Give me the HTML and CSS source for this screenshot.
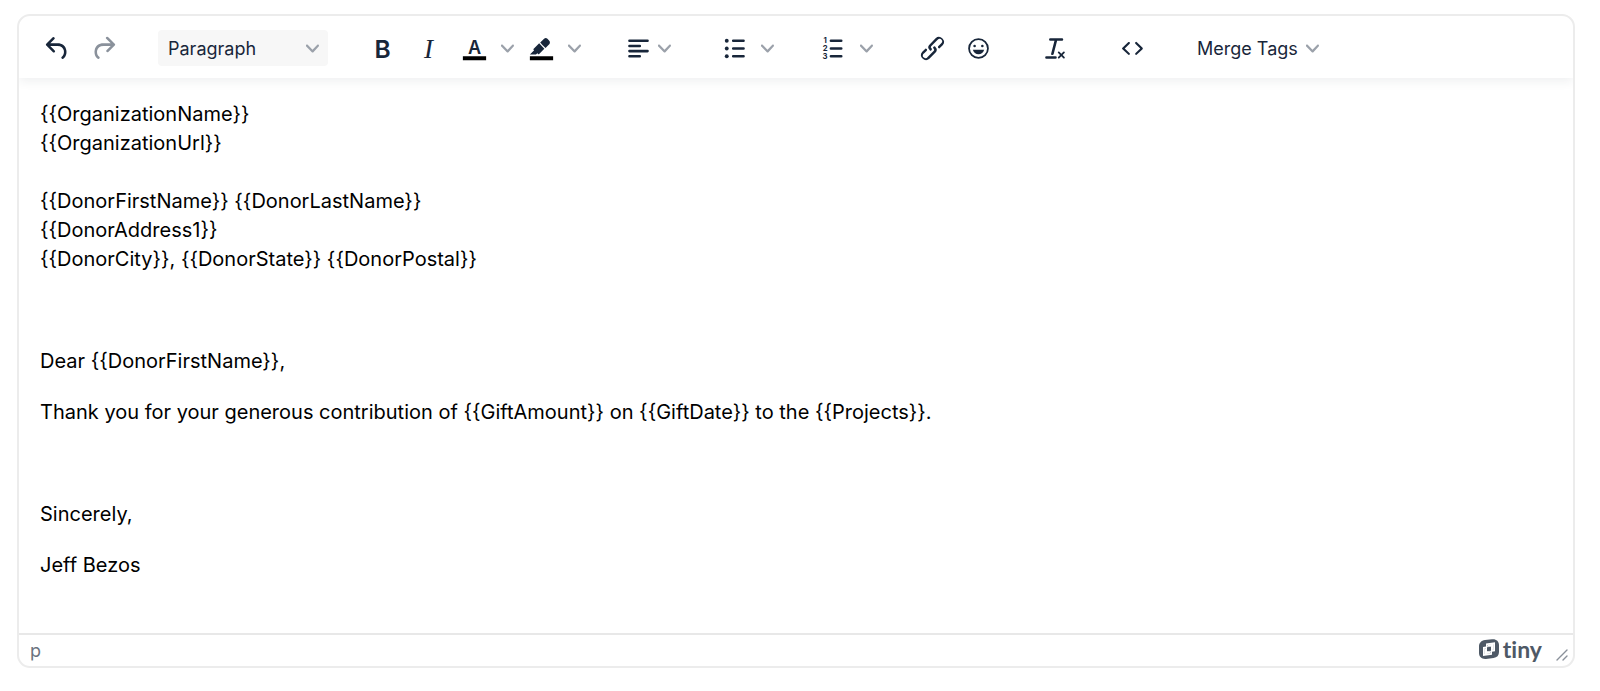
FILE: index.html
```html
<!DOCTYPE html>
<html lang="en">
<head>
    <meta charset="UTF-8">
    <meta name="viewport" content="width=device-width, initial-scale=1.0">
    <title>Letter Editor</title>
    <link rel="stylesheet" href="styles.css">
</head>
<body>
    <!-- shared chevron -->
    <svg class="sprite" aria-hidden="true">
        <symbol id="chevron" viewBox="0 0 10 10">
            <path d="M8.7 2.2c.3-.3.8-.3 1 0 .4.4.4.9 0 1.2L5.7 7.8c-.3.3-.9.3-1.2 0L.2 3.4a.8.8 0 0 1 0-1.2c.3-.3.8-.3 1.1 0L5 6l3.7-3.8Z"/>
        </symbol>
    </svg>

    <main class="editor">
        <div class="toolbar" role="toolbar" aria-label="Formatting">
            <div class="group">
                <button class="btn" type="button" aria-label="Undo">
                    <svg class="icon" viewBox="0 0 24 24"><path d="M6.4 8H12c3.7 0 6.2 2 6.8 5.1.6 2.7-.4 5.6-2.3 6.8a1 1 0 0 1-1-1.8c1.1-.6 1.8-2.7 1.4-4.6-.5-2.1-2.1-3.5-4.9-3.5H6.4l3.3 3.3a1 1 0 1 1-1.4 1.4l-5-5a1 1 0 0 1 0-1.4l5-5a1 1 0 0 1 1.4 1.4L6.4 8Z"/></svg>
                </button>
                <button class="btn" type="button" aria-label="Redo" disabled>
                    <svg class="icon" viewBox="0 0 24 24"><path d="M17.6 10H12c-2.8 0-4.4 1.4-4.9 3.5-.4 2 .3 4 1.4 4.6a1 1 0 1 1-1 1.8c-2-1.2-2.9-4.1-2.3-6.8.6-3 3-5.1 6.8-5.1h5.6l-3.3-3.3a1 1 0 1 1 1.4-1.4l5 5a1 1 0 0 1 0 1.4l-5 5a1 1 0 0 1-1.4-1.4l3.3-3.3Z"/></svg>
                </button>
            </div>

            <div class="group">
                <div class="select-box">
                    <select class="block-select" aria-label="Blocks">
                        <option>Paragraph</option>
                        <option>Heading 1</option>
                        <option>Heading 2</option>
                        <option>Heading 3</option>
                    </select>
                    <svg class="chevron"><use href="#chevron"/></svg>
                </div>
            </div>

            <div class="group">
                <button class="btn" type="button" aria-label="Bold">
                    <svg class="icon" viewBox="0 0 24 24"><text class="letter-bold" x="12" y="19">B</text></svg>
                </button>
                <button class="btn" type="button" aria-label="Italic">
                    <svg class="icon" viewBox="0 0 24 24"><text class="letter-italic" x="12" y="19">I</text></svg>
                </button>
                <div class="split">
                    <button class="btn" type="button" aria-label="Text color">
                        <svg class="icon" viewBox="0 0 24 24"><path class="swatch" d="M3 18h18v3H3z"/><text class="letter-color" x="12" y="16">A</text></svg>
                    </button>
                    <button class="btn-chevron" type="button" aria-label="Text color menu"><svg class="chevron"><use href="#chevron"/></svg></button>
                </div>
                <div class="split">
                    <button class="btn" type="button" aria-label="Highlight color">
                        <svg class="icon" viewBox="0 0 24 24"><path class="swatch" d="M3 18h18v3H3z"/><path d="M7.7 16.7H3l3.3-3.3-.7-.8L10.2 8l4 4.1-4 4.2c-.2.2-.6.2-.8 0l-.6-.7-1.1 1.1Zm5-7.5L11 7.4l3-2.9a2 2 0 0 1 2.6 0L18 6c.7.7.7 2 0 2.7l-2.9 2.9-1.8-1.8-.6-.6Z"/></svg>
                    </button>
                    <button class="btn-chevron" type="button" aria-label="Highlight color menu"><svg class="chevron"><use href="#chevron"/></svg></button>
                </div>
            </div>

            <div class="group">
                <button class="btn-menu" type="button" aria-label="Align">
                    <svg class="icon" viewBox="0 0 24 24"><path d="M5 5h14a1 1 0 0 1 0 2H5a1 1 0 1 1 0-2Zm0 4h8a1 1 0 0 1 0 2H5a1 1 0 1 1 0-2Zm0 8h8a1 1 0 0 1 0 2H5a1 1 0 0 1 0-2Zm0-4h14a1 1 0 0 1 0 2H5a1 1 0 0 1 0-2Z"/></svg>
                    <svg class="chevron"><use href="#chevron"/></svg>
                </button>
            </div>

            <div class="group">
                <div class="split">
                    <button class="btn" type="button" aria-label="Bullet list">
                        <svg class="icon" viewBox="0 0 24 24"><path d="M11 5h8a1 1 0 0 1 0 2h-8a1 1 0 0 1 0-2Zm0 6h8a1 1 0 0 1 0 2h-8a1 1 0 0 1 0-2Zm0 6h8a1 1 0 0 1 0 2h-8a1 1 0 0 1 0-2Z"/><circle cx="6" cy="6" r="1.5"/><circle cx="6" cy="12" r="1.5"/><circle cx="6" cy="18" r="1.5"/></svg>
                    </button>
                    <button class="btn-chevron" type="button" aria-label="Bullet list styles"><svg class="chevron"><use href="#chevron"/></svg></button>
                </div>
            </div>

            <div class="group">
                <div class="split">
                    <button class="btn" type="button" aria-label="Numbered list">
                        <svg class="icon" viewBox="0 0 24 24"><path d="M10 5h8a1 1 0 0 1 0 2h-8a1 1 0 1 1 0-2Zm0 6h8a1 1 0 0 1 0 2h-8a1 1 0 0 1 0-2Zm0 6h8a1 1 0 0 1 0 2h-8a1 1 0 0 1 0-2Z"/><text class="digit" x="5.5" y="8">1</text><text class="digit" x="5.5" y="14">2</text><text class="digit" x="5.5" y="20">3</text></svg>
                    </button>
                    <button class="btn-chevron" type="button" aria-label="Numbered list styles"><svg class="chevron"><use href="#chevron"/></svg></button>
                </div>
            </div>

            <div class="group">
                <button class="btn" type="button" aria-label="Insert link">
                    <svg class="icon" viewBox="0 0 24 24"><path d="M6.2 12.3a1 1 0 0 1 1.4 1.4l-2 2a2 2 0 1 0 2.6 2.8l4.8-4.8a1 1 0 0 0 0-1.4 1 1 0 1 1 1.4-1.3 2.9 2.9 0 0 1 0 4L9.6 20a3.9 3.9 0 0 1-5.5-5.5l2-2Zm11.6-.6a1 1 0 0 1-1.4-1.4l2-2a2 2 0 1 0-2.6-2.8L11 10.3a1 1 0 0 0 0 1.4A1 1 0 1 1 9.6 13a2.9 2.9 0 0 1 0-4L14.4 4a3.9 3.9 0 0 1 5.5 5.5l-2 2Z"/></svg>
                </button>
                <button class="btn" type="button" aria-label="Emojis">
                    <svg class="icon" viewBox="0 0 24 24"><circle class="line" cx="12" cy="12" r="7.3"/><circle cx="9" cy="10" r="1"/><circle cx="15" cy="10" r="1"/><path d="M7.6 13h8.8c-.4 2-2.3 3.5-4.4 3.5S8.1 15 7.6 13Z"/></svg>
                </button>
            </div>

            <div class="group">
                <button class="btn" type="button" aria-label="Clear formatting">
                    <svg class="icon" viewBox="0 0 24 24"><path d="M13.2 6a1 1 0 0 1 0 .2l-2.6 10a1 1 0 0 1-1 .8h-.2a.8.8 0 0 1-.8-1l2.6-10H8a1 1 0 1 1 0-2h9a1 1 0 0 1 0 2h-3.8ZM5 18h7a1 1 0 0 1 0 2H5a1 1 0 0 1 0-2Zm13 1.5L16.5 18 15 19.5a.7.7 0 0 1-1-1l1.5-1.5-1.5-1.5a.7.7 0 0 1 1-1l1.5 1.5 1.5-1.5a.7.7 0 0 1 1 1L17.5 17l1.5 1.5a.7.7 0 0 1-1 1Z"/></svg>
                </button>
            </div>

            <div class="group">
                <button class="btn" type="button" aria-label="Source code">
                    <svg class="icon" viewBox="0 0 24 24"><path d="M9.8 15.7c.3.3.3.8 0 1-.3.4-.9.4-1.2 0l-4.4-4.1a.8.8 0 0 1 0-1.2l4.4-4.2c.3-.3.9-.3 1.2 0 .3.3.3.8 0 1.1L6 12l3.8 3.7ZM14.2 15.7c-.3.3-.3.8 0 1 .4.4.9.4 1.2 0l4.4-4.1c.3-.3.3-.9 0-1.2l-4.4-4.2a.8.8 0 0 0-1.2 0c-.3.3-.3.8 0 1.1L18 12l-3.8 3.7Z"/></svg>
                </button>
            </div>

            <div class="group">
                <button class="btn-menu btn-text" type="button">
                    <span>Merge Tags</span>
                    <svg class="chevron"><use href="#chevron"/></svg>
                </button>
            </div>
        </div>

        <div class="content" contenteditable="true" spellcheck="false" role="textbox" aria-multiline="true" aria-label="Letter">
            <p>{{OrganizationName}}<br>{{OrganizationUrl}}<br><br>{{DonorFirstName}} {{DonorLastName}}<br>{{DonorAddress1}}<br>{{DonorCity}}, {{DonorState}} {{DonorPostal}}</p>
            <p><br></p>
            <p>Dear {{DonorFirstName}},</p>
            <p>Thank you for your generous contribution of {{GiftAmount}} on {{GiftDate}} to the {{Projects}}.</p>
            <p><br></p>
            <p>Sincerely,</p>
            <p>Jeff Bezos</p>
        </div>

        <div class="statusbar">
            <button class="path" type="button">p</button>
            <a class="brand" href="#">
                <svg class="brand-mark" viewBox="0 0 20 20">
                    <path d="M6 1 13 .2C17-.3 20 2 20 6v7c0 3.500-2 5.500-5.500 6L7 19.900C3 20.300 0 18 0 14V7.500C0 4 2.300 1.500 6 1Z"/>
                    <path class="cut" d="m7 4.500 9-1.300v9l-3 .5v3l-9 1.300V8l3-.5v-3Z"/>
                    <path d="m8.700 6 5.600-.8v5.500l-1.300.2V7l-4.300.6V6ZM5.700 9.500 7 9.300v3.900l4.300-.6v1.600l-5.600.8V9.500ZM8 8.300l4-.6v4l-4 .6v-4Z"/>
                    <path class="cut" d="m9 5.500 5.500-.8v6L13 11V7l-4 .5v-2ZM5.500 9.400 7 9.200V13l4-.5v2l-5.500.8V9.400Z"/>
                </svg>
                <span>tiny</span>
            </a>
            <svg class="resize" viewBox="0 0 12 12"><path d="M1 11 11 1M7 11l4-4"/></svg>
        </div>
    </main>
</body>
</html>
```
FILE: styles.css
```css
* {
    box-sizing: border-box;
}
body {
    margin: 0;
    padding: 14px 25px 23px 17px;
    min-height: 100vh;
    display: flex;
    flex-direction: column;
    background-color: #ffffff;
    color: #18263a;
    font-family: Inter, "Liberation Sans", sans-serif;
}
button,
select {
    margin: 0;
    padding: 0;
    border: none;
    background: none;
    color: inherit;
    font-family: inherit;
    font-size: 18px;
    cursor: pointer;
}
.sprite {
    display: none;
}
.editor {
    flex: 1;
    display: flex;
    flex-direction: column;
    border: 2px solid #ececec;
    border-radius: 13px;
    overflow: hidden;
}

/* toolbar */
.toolbar {
    display: flex;
    flex-wrap: wrap;
    align-items: center;
    gap: 0 32px;
    min-height: 62px;
    padding: 2px 16px 0;
    box-shadow: 0 3px 10px rgba(34, 47, 62, 0.08);
}
.group {
    display: flex;
    align-items: center;
}
.group > .btn + .btn,
.group > .btn + .split {
    margin-left: 1px;
}
.btn,
.btn-menu,
.btn-chevron {
    display: flex;
    align-items: center;
    justify-content: center;
    height: 36px;
    border-radius: 4px;
}
.btn {
    width: 45px;
}
.btn-chevron {
    width: 21px;
    margin-right: 1px;
}
.btn-menu {
    gap: 4px;
    padding: 0 9px 0 5px;
}
.btn-text {
    gap: 8px;
    padding: 0 10px;
}
.btn:hover:enabled,
.btn-menu:hover,
.btn-chevron:hover {
    background-color: #f0f0f0;
}
.btn:disabled {
    opacity: 0.5;
    cursor: default;
}
.split {
    display: flex;
}
.icon {
    width: 31px;
    height: 31px;
    fill: #18263a;
}
.icon .line {
    fill: none;
    stroke: #18263a;
    stroke-width: 1.4;
}
.icon .swatch {
    fill: #000000;
}
.icon text {
    text-anchor: middle;
}
.letter-bold {
    font-size: 19px;
    font-weight: 600;
}
.letter-italic {
    font-family: "Liberation Serif", serif;
    font-size: 21px;
    font-style: italic;
}
.letter-color {
    font-size: 14px;
    font-weight: 600;
}
.digit {
    font-size: 6px;
    font-weight: 700;
}
.chevron {
    width: 13px;
    height: 13px;
    fill: #9ba1aa;
}
.select-box {
    display: grid;
    align-items: center;
    width: 170px;
    border-radius: 4px;
    background-color: #f7f7f7;
}
.select-box > * {
    grid-area: 1 / 1;
}
.block-select {
    width: 100%;
    height: 36px;
    padding: 0 32px 0 10px;
    appearance: none;
}
.select-box .chevron {
    justify-self: end;
    margin-right: 9px;
    pointer-events: none;
}

/* letter text */
.content {
    flex: 1;
    padding: 22px 21px;
    color: #000000;
    font-size: 20px;
    line-height: 29px;
    outline: none;
}
.content p {
    margin: 0 0 22px;
}
.content p:last-child {
    margin-bottom: 0;
}

/* status bar */
.statusbar {
    display: flex;
    align-items: center;
    height: 33px;
    padding: 0 5px 0 11px;
    border-top: 2px solid #e8e8e8;
    color: #6b7480;
}
.brand {
    display: flex;
    align-items: center;
    gap: 4px;
    margin-left: auto;
    padding-bottom: 4px;
    color: #4e5966;
    font-family: Lato, sans-serif;
    font-size: 23px;
    font-weight: 700;
    font-variant-ligatures: none;
    line-height: 24px;
    text-decoration: none;
}
.brand-mark {
    width: 20px;
    height: 20px;
    fill: #4e5966;
}
.brand-mark .cut {
    fill: #ffffff;
}
.resize {
    align-self: flex-end;
    width: 12px;
    height: 12px;
    margin: 0 0 5px 14px;
    fill: none;
    stroke: #8a919b;
    stroke-width: 1.4;
    stroke-linecap: round;
}
```
